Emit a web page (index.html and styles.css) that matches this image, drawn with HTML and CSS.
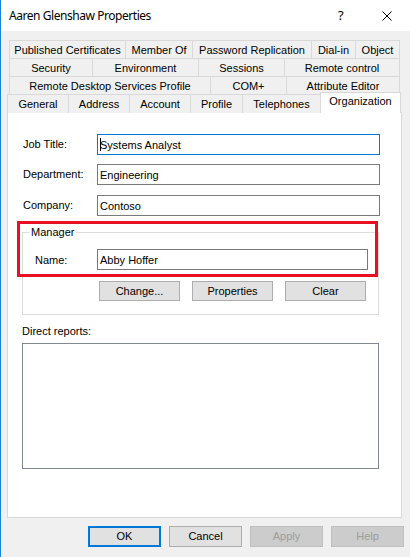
FILE: index.html
```html
<!DOCTYPE html>
<html lang="en">
<head>
<meta charset="utf-8">
<title>Aaren Glenshaw Properties</title>
<link rel="stylesheet" href="styles.css">
</head>
<body>
<div class="window">
  <div class="titlebar">
    <span class="title">Aaren Glenshaw Properties</span>
    <span class="help">?</span>
    <svg class="close" width="10" height="10" viewBox="0 0 10 10" aria-hidden="true">
      <path d="M0.5 0.5 L9.5 9.5 M9.5 0.5 L0.5 9.5" stroke="#000" stroke-width="1" fill="none"/>
    </svg>
  </div>

  <div class="dialog">
    <div class="tabs">
      <div class="tabrow row-a">
        <div class="tab">Published Certificates</div>
        <div class="tab">Member Of</div>
        <div class="tab">Password Replication</div>
        <div class="tab">Dial-in</div>
        <div class="tab">Object</div>
      </div>
      <div class="tabrow row-b">
        <div class="tab">Security</div>
        <div class="tab">Environment</div>
        <div class="tab">Sessions</div>
        <div class="tab">Remote control</div>
      </div>
      <div class="tabrow row-c">
        <div class="tab">Remote Desktop Services Profile</div>
        <div class="tab">COM+</div>
        <div class="tab">Attribute Editor</div>
      </div>
      <div class="tabrow row-d">
        <div class="tab">General</div>
        <div class="tab">Address</div>
        <div class="tab">Account</div>
        <div class="tab">Profile</div>
        <div class="tab">Telephones</div>
        <div class="tab active">Organization</div>
      </div>
    </div>

    <div class="panel">
      <div class="field-row">
        <span class="label">Job Title:</span>
        <div class="input focused"><span class="caret"></span>Systems Analyst</div>
      </div>
      <div class="field-row">
        <span class="label">Department:</span>
        <div class="input">Engineering</div>
      </div>
      <div class="field-row wide-gap">
        <span class="label">Company:</span>
        <div class="input">Contoso</div>
      </div>

      <fieldset class="group">
        <legend>Manager</legend>
        <div class="name-row">
          <span class="name-label">Name:</span>
          <div class="input name-input">Abby Hoffer</div>
        </div>
        <div class="group-buttons">
          <button class="btn small">Change...</button>
          <button class="btn small">Properties</button>
          <button class="btn small">Clear</button>
        </div>
      </fieldset>

      <div class="highlight"></div>

      <div class="reports-label">Direct reports:</div>
      <div class="listbox"></div>
    </div>

    <div class="dialog-buttons">
      <button class="btn wide default">OK</button>
      <button class="btn wide">Cancel</button>
      <button class="btn wide disabled">Apply</button>
      <button class="btn wide disabled">Help</button>
    </div>
  </div>
</div>
</body>
</html>
```

FILE: styles.css
```css
* {
  box-sizing: border-box;
}

html, body {
  margin: 0;
  padding: 0;
  background: #f0f0f0;
}

body {
  font-family: "Liberation Sans", Arial, sans-serif;
  font-size: 11px;
  color: #000;
}

.window {
  width: 410px;
  height: 557px;
  background: #f0f0f0;
  border-left: 1px solid #1883d7;
  overflow: hidden;
}

/* ---- title bar ---- */
.titlebar {
  height: 31px;
  background: #fff;
  display: flex;
  align-items: center;
  padding-left: 8px;
}

.title {
  font-family: "Noto Sans", "Open Sans", sans-serif;
  font-size: 12px;
  letter-spacing: -0.45px;
  flex: 1;
  padding-bottom: 1px;
}

.help {
  font-family: "Noto Sans", sans-serif;
  font-size: 13px;
  width: 7px;
  margin-right: 37px;
  padding-bottom: 1px;
}

.close {
  display: block;
  margin-right: 18px;
}

/* ---- tab strip ---- */
.dialog {
  padding-top: 9px;
}

.tabs {
  display: flex;
  flex-direction: column;
}

.tabrow {
  display: grid;
  height: 18px;
  margin-left: 8px;
  width: 391px;
}

.row-a { grid-template-columns: 116px 67px 119px 44px 45px; }
.row-b { grid-template-columns: 83px 106px 86px 116px; }
.row-c { grid-template-columns: 201px 76px 114px; }
.row-d {
  margin-left: 6px;
  width: 394px;
  grid-template-columns: 61px 61px 61px 52px 78px 81px;
  position: relative;
  z-index: 1;
}

.tab {
  border-top: 1px solid #d9d9d9;
  border-left: 1px solid #d9d9d9;
  background: #f0f0f0;
  display: flex;
  align-items: center;
  justify-content: center;
  white-space: nowrap;
  line-height: 13px;
  padding-top: 1px;
}

.tabrow .tab:last-child {
  border-right: 1px solid #d9d9d9;
}

.tab.active {
  background: #fff;
  margin-top: -2px;
  height: 21px;
  padding-top: 0;
  padding-bottom: 3px;
}

/* ---- page panel ---- */
.panel {
  position: relative;
  margin-left: 6px;
  width: 395px;
  height: 406px;
  background: #fff;
  border: 1px solid #d9d9d9;
  padding: 21px 0 0 15px;
}

.field-row {
  display: flex;
  align-items: center;
  height: 21px;
}

.field-row + .field-row {
  margin-top: 9px;
}

.field-row.wide-gap {
  margin-top: 10px;
}

.label {
  width: 74px;
  line-height: 13px;
}

.input {
  height: 21px;
  width: 283px;
  border: 1px solid #7a7a7a;
  background: #fff;
  padding: 0 2px;
  line-height: 18px;
  white-space: nowrap;
  display: flex;
  align-items: center;
}

.input.focused {
  border-color: #0078d7;
}

.caret {
  display: inline-block;
  width: 1px;
  height: 13px;
  background: #000;
  margin-right: -1px;
}

/* ---- manager group ---- */
.group {
  margin: 9px 0 0 -1px;
  width: 357px;
  border: 1px solid #dcdcdc;
  padding: 10px 0 13px 12px;
}

.group legend {
  margin-left: -6px;
  padding: 0 2px;
  line-height: 14px;
  font-size: 11px;
}

.name-row {
  display: flex;
  align-items: center;
  height: 21px;
}

.name-label {
  width: 62px;
}

.name-input {
  width: 271px;
}

.group-buttons {
  display: flex;
  gap: 12px;
  margin: 11px 0 0 64px;
}

.btn {
  font-family: "Liberation Sans", Arial, sans-serif;
  font-size: 11px;
  color: #000;
  background: #e1e1e1;
  border: 1px solid #adadad;
  padding: 0;
  margin: 0;
  line-height: 13px;
}

.btn.small {
  width: 81px;
  height: 20px;
}

.btn.wide {
  width: 73px;
  height: 21px;
}

.btn.default {
  border: 2px solid #0078d7;
}

.btn.disabled {
  background: #cccccc;
  border-color: #bfbfbf;
  color: #9d9d9d;
}

/* red call-out drawn over the manager field */
.highlight {
  position: absolute;
  left: 9px;
  top: 108px;
  width: 361px;
  height: 56px;
  border: 3px solid #e81123;
  pointer-events: none;
}

.reports-label {
  margin: 9px 0 0 -1px;
  line-height: 14px;
}

.listbox {
  margin: 5px 0 0 -1px;
  width: 357px;
  height: 126px;
  border: 1px solid #828790;
  background: #fff;
}

/* ---- dialog buttons ---- */
.dialog-buttons {
  display: flex;
  justify-content: flex-end;
  gap: 8px;
  margin-top: 8px;
  padding-right: 6px;
}
```
